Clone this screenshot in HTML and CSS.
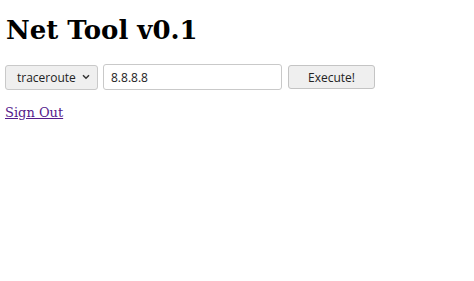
FILE: index.html
```html
<!DOCTYPE html>
<html>
<head>
<meta charset="utf-8">
<title>Net Tool v0.1</title>
<link rel="stylesheet" href="styles.css">
</head>
<body>
<h1 class="title">Net Tool v0.1</h1>
<form class="tool-form">
  <div class="select">
    <span class="select-label">traceroute</span>
    <svg class="chev" width="8" height="6" viewBox="0 0 8 6"><path d="M1 1.2 L4 4.2 L7 1.2" fill="none" stroke="#333" stroke-width="1.5"/></svg>
  </div>
  <input class="host" type="text" value="8.8.8.8">
  <button class="exec" type="button">Execute!</button>
</form>
<a class="signout" href="#">Sign Out</a>
</body>
</html>
```
FILE: styles.css
```css
html, body {
  margin: 0;
  background: #fff;
}
body {
  padding: 0 5px;
  font-family: "DejaVu Serif", serif;
  font-size: 13px;
}
.title {
  margin: 15px 0 0 1px;
  font-family: "DejaVu Serif", serif;
  font-weight: bold;
  font-size: 26px;
  line-height: 30px;
  color: #000;
}
.tool-form {
  display: flex;
  align-items: center;
  margin-top: 19px;
  height: 26px;
}
.select {
  box-sizing: border-box;
  width: 93px;
  height: 25px;
  display: flex;
  align-items: center;
  gap: 6px;
  padding-left: 11px;
  border: 1px solid #c9c9c9;
  border-radius: 3px;
  background: #efefef;
  font-family: "Open Sans", sans-serif;
  font-size: 12px;
  color: #222;
}
.chev {
  display: block;
}
.host {
  box-sizing: border-box;
  margin: 0 0 0 5px;
  width: 179px;
  height: 26px;
  padding: 0 0 0 7px;
  border: 1px solid #c9c9c9;
  border-radius: 3px;
  background: #fff;
  font-family: "Open Sans", sans-serif;
  font-size: 12px;
  color: #222;
  outline: none;
}
.exec {
  box-sizing: border-box;
  margin-left: 6px;
  width: 87px;
  height: 24px;
  border: 1px solid #c4c4c4;
  border-radius: 3px;
  background: #efefef;
  font-family: "Open Sans", sans-serif;
  font-size: 12px;
  color: #222;
  padding: 0;
}
.signout {
  display: block;
  margin-top: 15px;
  font-family: "DejaVu Serif", serif;
  font-size: 13px;
  line-height: 15px;
  color: #551a8b;
  text-decoration: underline;
  width: max-content;
}
```
